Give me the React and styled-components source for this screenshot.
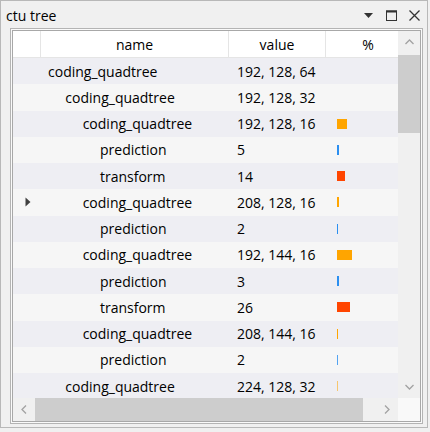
import React from "react";
import styled, { createGlobalStyle } from "styled-components";

const rows = [
  { name: "coding_quadtree", level: 1, value: "192, 128, 64" },
  { name: "coding_quadtree", level: 2, value: "192, 128, 32" },
  { name: "coding_quadtree", level: 3, value: "192, 128, 16", bar: "orange", w: 10 },
  { name: "prediction", level: 4, value: "5", bar: "blue", w: 2 },
  { name: "transform", level: 4, value: "14", bar: "red", w: 8 },
  { name: "coding_quadtree", level: 3, value: "208, 128, 16", bar: "orange", w: 2, arrow: true },
  { name: "prediction", level: 4, value: "2", bar: "blue", w: 1 },
  { name: "coding_quadtree", level: 3, value: "192, 144, 16", bar: "orange", w: 15 },
  { name: "prediction", level: 4, value: "3", bar: "blue", w: 2 },
  { name: "transform", level: 4, value: "26", bar: "red", w: 13 },
  { name: "coding_quadtree", level: 3, value: "208, 144, 16", bar: "orange", w: 1 },
  { name: "prediction", level: 4, value: "2", bar: "blue", w: 1, o: 0.8 },
  { name: "coding_quadtree", level: 2, value: "224, 128, 32", bar: "orange", w: 1, o: 0.55 },
];

const barColors = { orange: "#ffa500", red: "#ff4500", blue: "#2b8ff0" };

const Global = createGlobalStyle`
  body {
    margin: 0;
    background: #f0f0f0;
    font-family: "Open Sans", "Noto Sans", sans-serif;
    font-size: 14px;
    color: #000;
  }
  * { box-sizing: border-box; }
`;

const Chevron = ({ dir }) => {
  const pts = {
    up: "0.5,5 4.5,1 8.5,5",
    down: "0.5,1 4.5,5 8.5,1",
    left: "5,0.5 1,4.5 5,8.5",
    right: "1,0.5 5,4.5 1,8.5",
  }[dir];
  const vertical = dir === "up" || dir === "down";
  return (
    <svg width={vertical ? 9 : 6} height={vertical ? 6 : 9}>
      <polyline points={pts} fill="none" stroke="#a2a2a2" strokeWidth="1.3" />
    </svg>
  );
};

const App = () => {
  return (
    <>
      <Global />
      <Window>
        <TitleBar>
          <Title>ctu tree</Title>
          <TitleButtons>
            <TitleButton>
              <svg width="9" height="5">
                <polygon points="0,0 9,0 4.5,5" fill="#333" />
              </svg>
            </TitleButton>
            <TitleButton>
              <svg width="11" height="11">
                <rect x="0.5" y="1" width="10" height="9.5" fill="none" stroke="#333" strokeWidth="1" />
                <line x1="0" y1="1.5" x2="11" y2="1.5" stroke="#333" strokeWidth="2" />
              </svg>
            </TitleButton>
            <TitleButton>
              <svg width="11" height="11">
                <path d="M0.5 0.5 L10.5 10.5 M10.5 0.5 L0.5 10.5" stroke="#333" strokeWidth="1.3" />
              </svg>
            </TitleButton>
          </TitleButtons>
        </TitleBar>
        <Frame>
          <View>
            <Tree>
              <Header>
                <HeadCell />
                <HeadCell>name</HeadCell>
                <HeadCell>value</HeadCell>
                <HeadCell $pad={12}>%</HeadCell>
              </Header>
              {rows.map((r, i) => (
                <Row key={i} $odd={i % 2 === 0}>
                  <Branch>
                    {r.arrow && (
                      <svg width="6" height="10">
                        <polygon points="0.5,0.5 5.5,5 0.5,9.5" fill="#404040" />
                      </svg>
                    )}
                  </Branch>
                  <Name style={{ paddingLeft: 7 + (r.level - 1) * 17.33 }}>{r.name}</Name>
                  <Value>{r.value}</Value>
                  <Percent>
                    {r.bar && (
                      <Bar
                        $color={barColors[r.bar]}
                        style={{ width: r.w, opacity: r.o ?? 1 }}
                      />
                    )}
                  </Percent>
                </Row>
              ))}
            </Tree>
            <VScroll>
              <Arrow>
                <Chevron dir="up" />
              </Arrow>
              <VThumb />
              <Track />
              <Arrow>
                <Chevron dir="down" />
              </Arrow>
            </VScroll>
            <HScroll>
              <Arrow>
                <Chevron dir="left" />
              </Arrow>
              <HThumb />
              <Track />
              <Arrow>
                <Chevron dir="right" />
              </Arrow>
            </HScroll>
            <Corner />
          </View>
        </Frame>
      </Window>
    </>
  );
};

const Window = styled.div`
  width: 428px;
  height: 428px;
  border: 1px solid #b8b8b8;
  background: #f0f0f0;
  display: flex;
  flex-direction: column;
`;
const TitleBar = styled.div`
  height: 27px;
  display: flex;
  align-items: center;
  padding: 2px 1px 0 5px;
`;
const Title = styled.span`
  font-size: 14px;
  color: #000;
`;
const TitleButtons = styled.div`
  margin-left: auto;
  display: flex;
`;
const TitleButton = styled.div`
  width: 23px;
  height: 22px;
  display: flex;
  align-items: center;
  justify-content: center;
`;
const Frame = styled.div`
  margin: 0 4px 3px 9px;
  width: 413px;
  height: 396px;
  border: 1px solid #b4b4b4;
  background: #fafafa;
  padding: 1px;
`;
const View = styled.div`
  width: 100%;
  height: 100%;
  border: 1px solid #a8a8a8;
  background: #fff;
  display: grid;
  grid-template-columns: 385px 22px;
  grid-template-rows: 367px 1fr;
  overflow: hidden;
`;
const Tree = styled.div`
  overflow: hidden;
  background: #fff;
`;
const Header = styled.div`
  height: 27px;
  display: grid;
  grid-template-columns: 28px 188px 97px 1fr;
  background: #fff;
  border-bottom: 1px solid #e5e5e5;
`;
const HeadCell = styled.div`
  display: flex;
  align-items: center;
  justify-content: center;
  padding-left: ${(p) => p.$pad || 0}px;
  border-right: 1px solid #e5e5e5;
  &:last-child {
    border-right: none;
  }
`;
const Row = styled.div`
  height: 26.25px;
  display: grid;
  grid-template-columns: 28px 188px 97px 1fr;
  align-items: center;
  background: ${(p) => (p.$odd ? "#eeeef3" : "#f6f6f6")};
  white-space: nowrap;
`;
const Branch = styled.div`
  display: flex;
  align-items: center;
  padding-left: 12px;
`;
const Name = styled.div`
  overflow: hidden;
`;
const Value = styled.div`
  padding-left: 8px;
`;
const Percent = styled.div`
  display: flex;
  align-items: center;
  padding-left: 11px;
`;
const Bar = styled.div`
  height: 10px;
  background: ${(p) => p.$color};
`;
const VScroll = styled.div`
  background: #f0f0f0;
  display: flex;
  flex-direction: column;
`;
const HScroll = styled.div`
  background: #f0f0f0;
  display: flex;
`;
const Arrow = styled.div`
  flex: 0 0 22px;
  height: 22px;
  display: flex;
  align-items: center;
  justify-content: center;
  ${HScroll} & {
    height: auto;
  }
`;
const Track = styled.div`
  flex: 1;
`;
const VThumb = styled.div`
  height: 78px;
  margin-top: 2px;
  background: #cdcdcd;
`;
const HThumb = styled.div`
  width: 328px;
  background: #cdcdcd;
`;
const Corner = styled.div`
  background: #f9f9f9;
`;

export default App;
